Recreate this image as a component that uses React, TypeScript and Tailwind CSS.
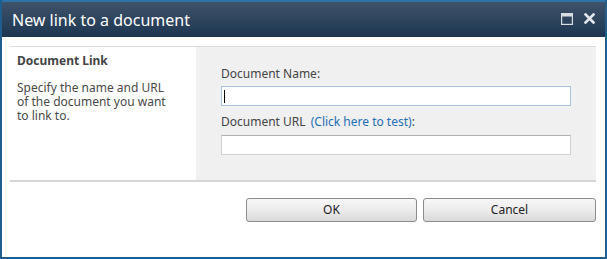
import { useState } from "react";

const font = { fontFamily: '"Noto Sans", "Open Sans", sans-serif' };

function MaximizeIcon() {
	return (
		<svg width="12" height="12" viewBox="0 0 12 12">
			<rect x="0.5" y="0.5" width="11" height="11" fill="none" stroke="#d8dde2" strokeWidth="1.4" />
			<rect x="1" y="1" width="10" height="2.5" fill="#d8dde2" />
		</svg>
	);
}

function CloseIcon() {
	return (
		<svg width="11" height="11" viewBox="0 0 11 11">
			<path d="M1.5 1.5l8 8M9.5 1.5l-8 8" stroke="#e4e8ec" strokeWidth="2.6" strokeLinecap="square" />
		</svg>
	);
}

export default function App() {
	const [name, setName] = useState("");
	const [url, setUrl] = useState("");

	return (
		<div
			className="w-[607px] h-[259px] flex flex-col border-2 border-t-0 border-[#1e5f8f] bg-white"
			style={font}
		>
			{/* Title bar */}
			<div className="h-[37px] shrink-0 flex items-center pl-[10px] pr-[10px] border-t-2 border-[#2d73a8] bg-gradient-to-b from-[#3f536a] to-[#1d3651]">
				<span className="flex-1 text-[16px] text-white leading-none">
					New link to a document
				</span>
				<div className="flex items-center gap-[11px] mt-[-2px]">
					<MaximizeIcon />
					<CloseIcon />
				</div>
			</div>

			{/* Body */}
			<div className="flex-1 flex flex-col px-[8px] pt-[9px]">
				<div className="flex h-[136px] border-t border-[#dcdcdc] border-b-2 border-b-[#d6d6d6] mr-[1px]">
					<div className="w-[186px] pl-[7px] pr-[4px] pt-[5px] text-[#444]">
						<div className="text-[12px] font-bold">Document Link</div>
						<p className="mt-[11px] w-[158px] text-[12px] leading-[14px] text-[#4a4a4a]">
							Specify the name and URL of the document you want to link to.
						</p>
					</div>
					<div className="flex-1 bg-[#f0f0f0] pl-[25px] pr-[25px] pt-[19px] text-[12px] text-[#444]">
						<label className="block leading-[16px]">Document Name:</label>
						<div className="relative mt-[4px] w-[350px]">
							<input
								type="text"
								autoFocus
								value={name}
								onChange={(e) => setName(e.target.value)}
								className="block w-full h-[20px] bg-white border border-[#a9c4e0] outline-none px-[3px] text-[12px] caret-black"
							/>
							{name === "" && (
								<span className="absolute left-[3px] top-[4px] w-px h-[13px] bg-black" />
							)}
						</div>
						<div className="mt-[8px] leading-[16px]">
							Document URL{" "}
							<a className="text-[#1e6fb5] ml-[2px]">(Click here to test)</a>:
						</div>
						<input
							type="text"
							value={url}
							onChange={(e) => setUrl(e.target.value)}
							className="mt-[5px] block w-[350px] h-[20px] bg-white border border-[#d0d0d0] border-t-[#b0b0b0] outline-none px-[3px] text-[12px]"
						/>
					</div>
				</div>

				{/* Buttons */}
				<div className="flex justify-end gap-[6px] mt-[16px] mr-[1px]">
					<button
						type="button"
						className="w-[171px] h-[24px] rounded-[3px] border border-[#8c8c8c] bg-gradient-to-b from-[#f7f7f7] via-[#ececec] to-[#d9d9d9] text-[12px] text-[#222]"
					>
						OK
					</button>
					<button
						type="button"
						className="w-[173px] h-[24px] rounded-[3px] border border-[#8c8c8c] bg-gradient-to-b from-[#f7f7f7] via-[#ececec] to-[#d9d9d9] text-[12px] text-[#222]"
					>
						Cancel
					</button>
				</div>
			</div>
		</div>
	);
}
